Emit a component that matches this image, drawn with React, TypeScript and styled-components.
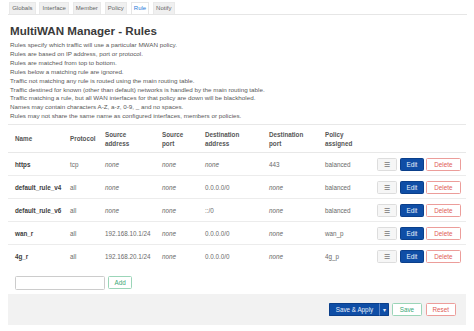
import { FC } from 'react';
import styled, { createGlobalStyle } from 'styled-components';

const GlobalStyle = createGlobalStyle`
  html, body {
    margin: 0;
    padding: 0;
    background: #fff;
  }
  body {
    font-family: 'Liberation Sans', Arial, sans-serif;
    color: #404040;
  }
`;

const tabs = ['Globals', 'Interface', 'Member', 'Policy', 'Rule', 'Notify'];

const notes = [
  'Rules specify which traffic will use a particular MWAN policy.',
  'Rules are based on IP address, port or protocol.',
  'Rules are matched from top to bottom.',
  'Rules below a matching rule are ignored.',
  'Traffic not matching any rule is routed using the main routing table.',
  'Traffic destined for known (other than default) networks is handled by the main routing table.',
  'Traffic matching a rule, but all WAN interfaces for that policy are down will be blackholed.',
  'Names may contain characters A-Z, a-z, 0-9, _ and no spaces.',
  'Rules may not share the same name as configured interfaces, members or policies.',
];

const rules = [
  { name: 'https', proto: 'tcp', src: 'none', sport: 'none', dest: 'none', dport: '443', policy: 'balanced' },
  { name: 'default_rule_v4', proto: 'all', src: 'none', sport: 'none', dest: '0.0.0.0/0', dport: 'none', policy: 'balanced' },
  { name: 'default_rule_v6', proto: 'all', src: 'none', sport: 'none', dest: '::/0', dport: 'none', policy: 'balanced' },
  { name: 'wan_r', proto: 'all', src: '192.168.10.1/24', sport: 'none', dest: '0.0.0.0/0', dport: 'none', policy: 'wan_p' },
  { name: '4g_r', proto: 'all', src: '192.168.20.1/24', sport: 'none', dest: '0.0.0.0/0', dport: 'none', policy: '4g_p' },
];

const widths = [55, 35, 57, 43, 64, 56, 52, 96];

const Val: FC<{ v: string }> = ({ v }) =>
  v === 'none' ? <Empty>none</Empty> : <>{v}</>;

const App: FC = () => {
  return (
    <Page>
      <GlobalStyle />
      <Tabs>
        {tabs.map((t) => (
          <Tab key={t} $active={t === 'Rule'}>
            {t}
          </Tab>
        ))}
      </Tabs>
      <Title>MultiWAN Manager - Rules</Title>
      <Notes>
        {notes.map((n) => (
          <div key={n}>{n}</div>
        ))}
      </Notes>
      <Table>
        <colgroup>
          {widths.map((w, i) => (
            <col key={i} style={{ width: w }} />
          ))}
        </colgroup>
        <thead>
          <tr>
            <Th>Name</Th>
            <Th>Protocol</Th>
            <Th>
              Source
              <br />
              address
            </Th>
            <Th>
              Source
              <br />
              port
            </Th>
            <Th>
              Destination
              <br />
              address
            </Th>
            <Th>
              Destination
              <br />
              port
            </Th>
            <Th>
              Policy
              <br />
              assigned
            </Th>
            <Th />
          </tr>
        </thead>
        <tbody>
          {rules.map((r) => (
            <tr key={r.name}>
              <NameCell>{r.name}</NameCell>
              <Td>{r.proto}</Td>
              <Td>
                <Val v={r.src} />
              </Td>
              <Td>
                <Val v={r.sport} />
              </Td>
              <Td>
                <Val v={r.dest} />
              </Td>
              <Td>
                <Val v={r.dport} />
              </Td>
              <Td>{r.policy}</Td>
              <ActionCell>
                <Actions>
                  <DragButton>☰</DragButton>
                  <Button $kind="primary">Edit</Button>
                  <Button $kind="negative" $pad={7.5}>
                    Delete
                  </Button>
                </Actions>
              </ActionCell>
            </tr>
          ))}
        </tbody>
      </Table>
      <AddRow>
        <NameInput />
        <Button $kind="positive">Add</Button>
      </AddRow>
      <Footer>
        <SplitButton>
          <SplitMain>Save &amp; Apply</SplitMain>
          <SplitArrow>▾</SplitArrow>
        </SplitButton>
        <Button $kind="positive" $pad={7}>
          Save
        </Button>
        <Button $kind="negative" $pad={6}>
          Reset
        </Button>
      </Footer>
    </Page>
  );
};

const Page = styled.div`
  padding: 2px 8px 0 8px;
  width: 458px;
`;

const Tabs = styled.div`
  display: flex;
  gap: 3.6px;
  padding-left: 1px;
  border-bottom: 1px solid #e6e6e6;
  width: 458px;
`;

const Tab = styled.div<{ $active?: boolean }>`
  height: 11px;
  line-height: 11px;
  padding: 0 2.2px;
  font-size: 6px;
  color: ${(p) => (p.$active ? '#2a7ad8' : '#666')};
  background: ${(p) => (p.$active ? '#fff' : '#f0f0f0')};
  border: 1px solid ${(p) => (p.$active ? '#e6e6e6' : '#e9e9e9')};
  border-bottom: none;
`;

const Title = styled.h2`
  margin: 9px 0 4px 2px;
  font-size: 11.6px;
  line-height: 13px;
  font-weight: bold;
  color: #3a3a3a;
`;

const Notes = styled.div`
  margin-left: 2px;
  font-size: 6.25px;
  line-height: 8.9px;
  color: #595959;
`;

const Table = styled.table`
  margin-top: 3px;
  width: 458px;
  table-layout: fixed;
  border-collapse: collapse;
  font-size: 6.3px;
  color: #6a6a6a;
  border-top: 1px solid #e8e8e8;
`;

const Th = styled.th`
  text-align: left;
  font-weight: bold;
  color: #555;
  line-height: 9px;
  padding: 4.5px 7px;
  height: 18px;
  vertical-align: middle;
  border-bottom: 1px solid #e8e8e8;
`;

const Td = styled.td`
  height: 22px;
  padding: 0 7px;
  line-height: 9px;
  vertical-align: middle;
  border-bottom: 1px solid #ececec;
  white-space: nowrap;

  tr:last-child > & {
    border-bottom: none;
  }
`;

const NameCell = styled(Td)`
  font-weight: bold;
  color: #3c3c3c;
`;

const ActionCell = styled(Td)`
  padding: 0 5px 0 0;
`;

const Actions = styled.div`
  display: flex;
  justify-content: flex-end;
  gap: 2px;
`;

const Empty = styled.em`
  font-style: italic;
`;

const Button = styled.button<{ $kind: 'primary' | 'positive' | 'negative'; $pad?: number }>`
  height: 13px;
  padding: 0 ${(p) => p.$pad ?? 5.5}px;
  font-family: 'Liberation Sans', Arial, sans-serif;
  font-size: 6.3px;
  line-height: 11px;
  border-radius: 1.5px;
  cursor: pointer;
  border: 1px solid
    ${(p) =>
      p.$kind === 'primary' ? '#0b3f8a' : p.$kind === 'positive' ? '#9bd5b8' : '#ec9d9a'};
  background: ${(p) => (p.$kind === 'primary' ? '#0f4ea6' : '#fff')};
  color: ${(p) =>
    p.$kind === 'primary' ? '#e8eefb' : p.$kind === 'positive' ? '#3aa876' : '#e05a55'};
`;

const DragButton = styled.button`
  width: 20px;
  height: 13px;
  padding: 0;
  font-size: 6.5px;
  line-height: 11px;
  border-radius: 1.5px;
  border: 1px solid #ddd;
  background: #f6f6f6;
  color: #777;
  margin-right: 1px;
`;

const AddRow = styled.div`
  display: flex;
  align-items: center;
  gap: 3px;
  padding: 8.5px 0 4px 7px;
`;

const NameInput = styled.input`
  box-sizing: border-box;
  width: 90px;
  height: 14px;
  border: 1px solid #ccc;
  border-radius: 1.5px;
  padding: 0 3px;
  font-size: 6.3px;
  outline: none;
`;

const Footer = styled.div`
  display: flex;
  justify-content: flex-end;
  align-items: center;
  gap: 3.5px;
  height: 31px;
  padding-right: 10px;
  background: #f2f2f2;
`;

const SplitButton = styled.div`
  display: flex;
  height: 13px;
  border-radius: 1.5px;
  overflow: hidden;
  margin-right: -1px;
`;

const SplitMain = styled.span`
  display: flex;
  align-items: center;
  padding: 0 6px;
  font-size: 6.3px;
  color: #e8eefb;
  background: #0f4ea6;
  border: 1px solid #0b3f8a;
  border-right: none;
`;

const SplitArrow = styled.span`
  display: flex;
  align-items: center;
  justify-content: center;
  width: 8px;
  font-size: 6px;
  color: #e8eefb;
  background: #0f4ea6;
  border: 1px solid #0b3f8a;
  border-left: 1px solid #5d86c8;
`;

export default App;
